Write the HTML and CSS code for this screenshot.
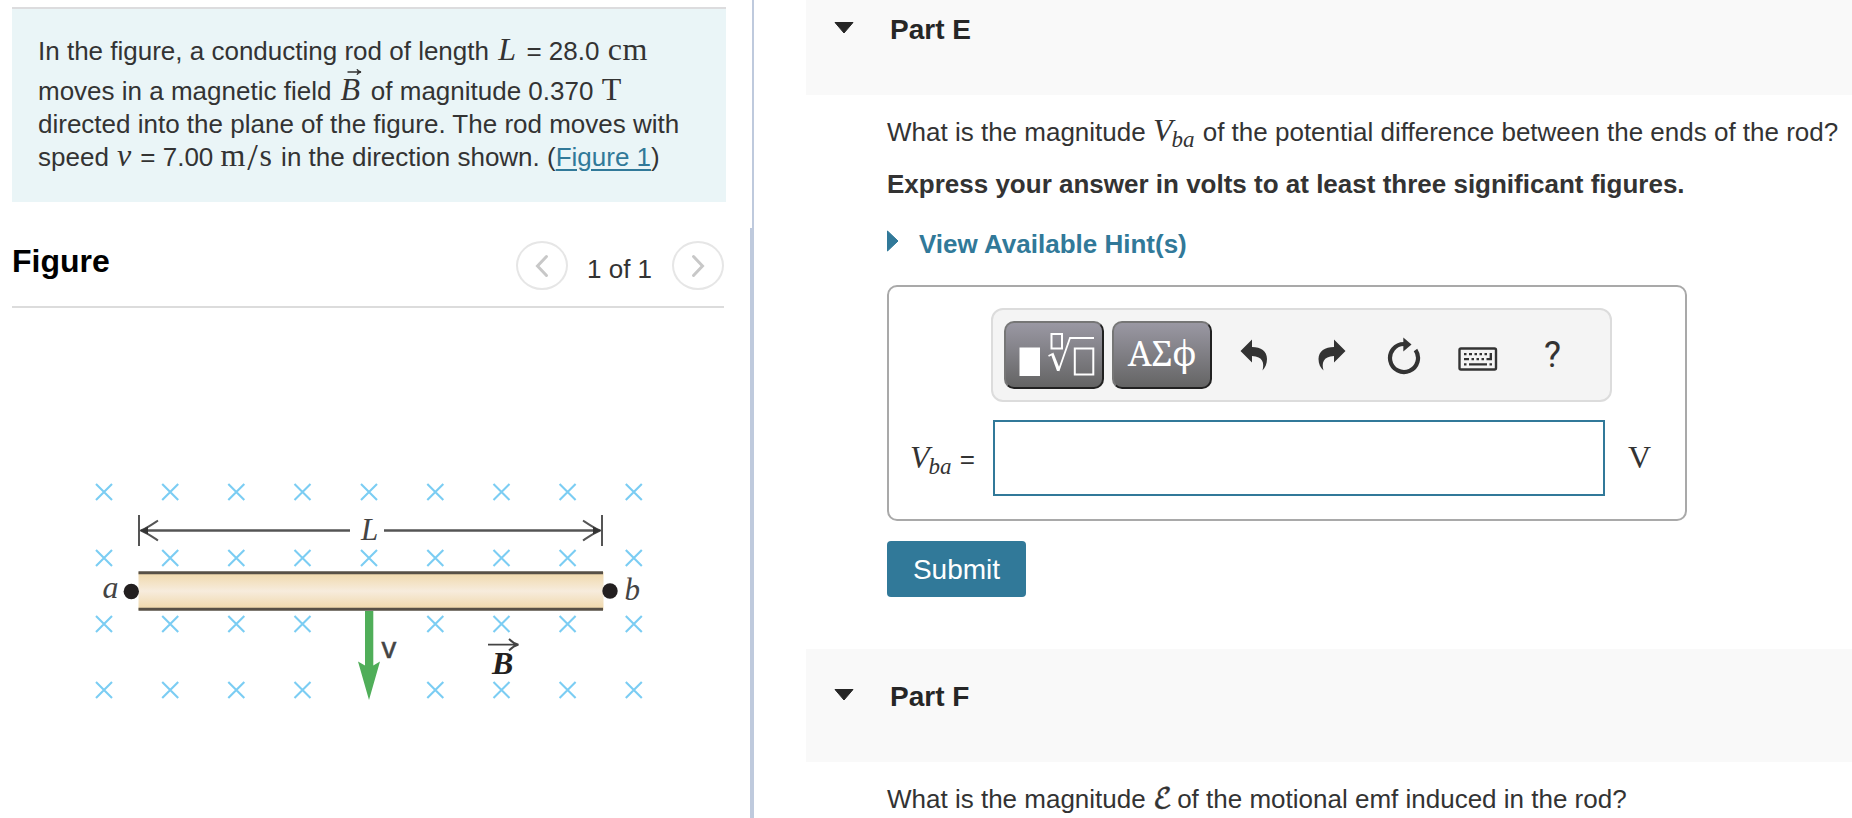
FILE: index.html
```html
<!DOCTYPE html>
<html lang="en">

<head>
    <meta charset="UTF-8" />
    <title>Motional emf</title>
    <link rel="stylesheet" href="styles.css">
</head>

<body>
    <div class="page">
        <div class="left">
            <div class="problem">
                <span class="line">In the figure, a conducting rod of length <i class="math sym-l">L</i> = 28.0 <span class="math unit-cm">cm</span></span>
                <span class="line raised">moves in a magnetic field <span class="math sym-b"><i>B</i><svg class="vec" width="15" height="8" viewBox="0 0 15 8"><path d="M0.5 4H13M10 1.2C10.6 2.8 12 3.7 14 4C12 4.3 10.6 5.2 10 6.8" fill="none" stroke="#333" stroke-width="1.4"/></svg></span> of magnitude 0.370 <span class="math unit-t">T</span></span>
                <span class="line">directed into the plane of the figure. The rod moves with</span>
                <span class="line">speed <i class="math sym-v">v</i> = 7.00 <span class="math unit-ms">m<span class="slash">/</span>s</span> in the direction shown. (<a class="link">Figure 1</a>)</span>
            </div>
            <div class="fighead">
                <h2>Figure</h2>
                <div class="pager">
                    <span class="round"><svg width="14" height="24" viewBox="0 0 14 24"><path d="M11.5 2.5L2.5 12L11.5 21.5" fill="none" stroke="#c8c8c8" stroke-width="3" stroke-linecap="round"/></svg></span>
                    <span class="count">1 of 1</span>
                    <span class="round"><svg width="14" height="24" viewBox="0 0 14 24"><path d="M2.5 2.5L11.5 12L2.5 21.5" fill="none" stroke="#c8c8c8" stroke-width="3" stroke-linecap="round"/></svg></span>
                </div>
            </div>
            <svg class="figure" width="712" height="510" viewBox="12 308 712 510">
                <defs>
                    <linearGradient id="rod" x1="0" y1="0" x2="0" y2="1">
                        <stop offset="0" stop-color="#efd7a8"/>
                        <stop offset="0.5" stop-color="#f7ecdd"/>
                        <stop offset="1" stop-color="#efd7a8"/>
                    </linearGradient>
                    <path id="x" d="M-8 -8L8 8M8 -8L-8 8" stroke="#7bcdf3" stroke-width="2.1"/>
                    <g id="four">
                        <use href="#x" x="104"/><use href="#x" x="170.2"/><use href="#x" x="236.3"/><use href="#x" x="302.5"/>
                    </g>
                    <g id="row">
                        <use href="#four"/><use href="#four" x="331.3"/>
                    </g>
                </defs>
                <use href="#row" y="492"/><use href="#x" x="369" y="492"/>
                <use href="#row" y="558"/><use href="#x" x="369" y="558"/>
                <use href="#row" y="624"/>
                <use href="#row" y="690"/>
                <!-- length marker -->
                <g fill="none" stroke="#555" stroke-width="2">
                    <path d="M139 515V546M602 515V546"/>
                    <path d="M141 530.5H350M384 530.5H600" stroke-width="2.4"/>
                    <path d="M158 520.5C152 524.5 147 528 141 530.5C147 533 152 536.5 158 540.5M583 520.5C589 524.5 594 528 600 530.5C594 533 589 536.5 583 540.5"/>
                </g>
                <path d="M140 530.5L148 526.5V534.5ZM601 530.5L593 526.5V534.5Z" fill="#333"/>
                <text class="lab" x="361" y="540" font-size="31">L</text>
                <!-- rod -->
                <rect x="138.5" y="572" width="465" height="38" fill="url(#rod)"/>
                <path d="M138.5 572.7H603M138.5 609.3H603" stroke="#575046" stroke-width="3"/>
                <circle cx="131.3" cy="591.5" r="7.7" fill="#231f20"/>
                <circle cx="610" cy="591" r="7.7" fill="#231f20"/>
                <text class="lab" x="102.5" y="598" font-size="32">a</text>
                <text class="lab" x="624.5" y="600" font-size="31">b</text>
                <!-- velocity -->
                <path d="M365 611H373.3V665.5L380 661.5L369 700L358 661.5L365 665.5Z" fill="#50ae59"/>
                <text class="vel" x="381.5" y="658">v</text>
                <path d="M488 644.7H517M509 639C512 642 515 644 518.5 644.7C515 645.5 512 647.5 509 650.5" fill="none" stroke="#444" stroke-width="1.8"/>
                <text class="lab bold" x="492" y="674" font-size="32">B</text>
            </svg>
        </div>
        <div class="divider"><div class="thumb"></div></div>
        <div class="right">
            <div class="parthead"><svg width="20" height="12" viewBox="0 0 20 12"><path d="M1 0.5H19L10 11Z" fill="#262626" stroke="#262626" stroke-linejoin="round"/></svg><h3>Part E</h3></div>
            <div class="body">
                <p>What is the magnitude <span class="math sym-vba"><i>V</i><i class="sub">ba</i></span> of the potential difference between the ends of the rod?</p>
                <p class="instr">Express your answer in volts to at least three significant figures.</p>
                <p class="hint"><svg width="12" height="22" viewBox="0 0 12 22"><path d="M0.5 1V21L11 11Z" fill="#317999" stroke="#317999" stroke-linejoin="round"/></svg>View Available Hint(s)</p>
                <div class="answer">
                    <div class="toolbar">
                        <span class="key"><svg width="96" height="64" viewBox="0 0 96 64">
                            <rect x="13.5" y="24.5" width="20.5" height="28.5" fill="#fff"/>
                            <g fill="none" stroke="#fff" stroke-width="2">
                                <rect x="45.5" y="11" width="10.5" height="14.5"/>
                                <rect x="68.8" y="25.5" width="18.5" height="26"/>
                                <path d="M42.5 33L46.5 31M52.5 48L64 15H88" stroke-width="1.8"/>
                            </g>
                            <path d="M45 31.5L47.3 29.5L53.5 45L52.5 48H51Z" fill="#fff"/>
                        </svg></span>
                        <span class="key greek">ΑΣϕ</span>
                        <svg class="undo" width="28" height="32" viewBox="0 0 28 32"><path d="M0.5 12L12 0.5V8C21 8 27 12 27 20C27 25 25 29 22.5 31.5C24.5 24 23 17.5 12 17V23.5Z" fill="#333"/></svg>
                        <svg class="redo" width="28" height="32" viewBox="0 0 28 32"><path d="M27.5 12L16 0.5V8C7 8 0.5 12 0.5 20C0.5 25 2.5 29 5.5 31.5C3.5 24 5 17.5 16 17V23.5Z" fill="#333"/></svg>
                        <svg class="reset" width="34" height="38" viewBox="0 0 34 38"><path d="M17 7A14 14 0 1 0 28.5 13" fill="none" stroke="#333" stroke-width="4.2"/><path d="M16.3 0.5L24.5 7.5L16.3 14.5Z" fill="#333"/></svg>
                        <svg class="keyboard" width="40" height="24" viewBox="0 0 40 24">
                            <rect x="1.5" y="1.5" width="36.5" height="21" rx="1.5" fill="none" stroke="#333" stroke-width="2.4"/>
                            <path d="M6 7.2H8.5M11 7.2H14M16.5 7.2H19M21.5 7.2H24M26.5 7.2H29M6 12.2H11M13.5 12.2H16M18.5 12.2H21M23.5 12.2H26M28.5 12.2H34M6 17.3H8.5M11 17.3H29M31.5 17.3H34" stroke="#333" stroke-width="2.3"/>
                            <path d="M32.8 6V13" stroke="#333" stroke-width="2.4"/>
                        </svg>
                        <span class="help">?</span>
                    </div>
                    <div class="entry">
                        <span class="label"><span class="math sym-vba"><i>V</i><i class="sub">ba</i></span> =</span>
                        <input type="text" class="field">
                        <span class="math unit-v">V</span>
                    </div>
                </div>
                <button class="submit">Submit</button>
            </div>
            <div class="parthead"><svg width="20" height="12" viewBox="0 0 20 12"><path d="M1 0.5H19L10 11Z" fill="#262626" stroke="#262626" stroke-linejoin="round"/></svg><h3>Part F</h3></div>
            <div class="body">
                <p>What is the magnitude <span class="sym-e">ℰ</span> of the motional emf induced in the rod?</p>
            </div>
        </div>
    </div>
</body>

</html>
```

FILE: styles.css
```css
body {
    margin: 0;
    background: #fff;
    color: #333;
    font-family: "Liberation Sans", Arial, sans-serif;
    font-size: 26px;
    overflow: hidden;
}

.page {
    display: flex;
    height: 818px;
    overflow: hidden;
}

.left {
    width: 738px;
    padding: 7px 0 0 12px;
    flex: none;
}

.problem {
    width: 714px;
    height: 195px;
    box-sizing: border-box;
    border-top: 2px solid #dcdcde;
    background: #eaf5f7;
    padding: 26px 0 0 26px;
    white-space: nowrap;
}

.line {
    display: block;
    line-height: 33px;
}

.line.raised {
    padding-top: 7px;
}

.math {
    display: inline-block;
    font-family: "Liberation Serif", "Times New Roman", serif;
    font-size: 32px;
    line-height: 0;
    white-space: nowrap;
}

.sym-l {
    width: 21px;
    margin-left: 2px;
}

.unit-cm {
    letter-spacing: 0.5px;
    margin-left: 1px;
}

.sym-b {
    position: relative;
    width: 23px;
    margin-left: 2px;
}

.unit-t {
    margin-left: 1px;
}

.vec {
    position: absolute;
    left: 6px;
    top: -21px;
}

.sym-v {
    width: 16px;
    margin-left: 1px;
}

.unit-ms {
    letter-spacing: 1.8px;
}

.slash {
    font-size: 38px;
    vertical-align: -4px;
}

.link {
    color: #317999;
    text-decoration: underline;
    text-decoration-thickness: 2px;
    text-underline-offset: 3px;
}

.fighead {
    display: flex;
    justify-content: space-between;
    width: 712px;
    height: 106px;
    box-sizing: border-box;
    border-bottom: 2px solid #dcdcdc;
}

h2 {
    margin: 41px 0 0;
    color: #000;
    font-size: 32px;
    line-height: 36px;
}

.pager {
    display: flex;
    gap: 21px;
    padding-top: 39px;
}

.round {
    display: flex;
    align-items: center;
    justify-content: center;
    width: 52px;
    height: 49px;
    box-sizing: border-box;
    border: 2px solid #e6e6e6;
    border-radius: 50%;
}

.count {
    width: 62px;
    margin: 0 2px 0 -2px;
    line-height: 57px;
    text-align: center;
    white-space: nowrap;
}

.figure {
    display: block;
}

.lab {
    font-family: "Liberation Serif", serif;
    font-style: italic;
    fill: #444;
}

.bold {
    font-weight: bold;
    fill: #231f20;
}

.vel {
    font-family: "Noto Sans", sans-serif;
    font-size: 29px;
    fill: #444;
    stroke: #444;
    stroke-width: 0.5px;
}

.divider {
    flex: none;
    width: 4px;
    height: 818px;
    box-sizing: border-box;
    padding-top: 228px;
    background: linear-gradient(to right, #fff 2px, #bfcadd 2px);
}

.thumb {
    height: 590px;
    background: #bfcadd;
}

.right {
    flex: 1;
    margin: -18px 0 0 52px;
}

.parthead {
    display: flex;
    height: 113px;
    box-sizing: border-box;
    padding: 30px 0 0 28px;
    background: #f9f9f9;
    color: #262626;
}

.parthead svg {
    margin-top: 10px;
}

h3 {
    margin: 1px 0 0 36px;
    font-size: 28px;
    line-height: 34px;
}

.body {
    padding: 20px 0 0 81px;
    white-space: nowrap;
}

p {
    margin: 0;
    line-height: 34px;
}

.sub {
    font-size: 23px;
    position: relative;
    top: 6px;
    left: -1px;
}

.instr {
    margin-top: 18px;
    font-weight: bold;
}

.hint {
    display: flex;
    gap: 20px;
    margin-top: 26px;
    color: #317999;
    font-weight: bold;
}

.hint svg {
    margin-top: 3px;
}

.answer {
    width: 800px;
    height: 236px;
    box-sizing: border-box;
    margin-top: 24px;
    border: 2px solid #a9a9a9;
    border-radius: 10px;
    padding-top: 21px;
}

.toolbar {
    display: flex;
    width: 621px;
    height: 94px;
    box-sizing: border-box;
    margin-left: 102px;
    border: 2px solid #dcdcdc;
    border-radius: 12px;
    background: #f4f4f4;
    padding: 11px;
}

.key {
    width: 100px;
    height: 68px;
    box-sizing: border-box;
    margin-right: 8px;
    border: 2px solid;
    border-color: #767676 #212121 #212121 #767676;
    border-radius: 10px;
    background: linear-gradient(#9a98a3, #646464);
    color: #fff;
}

.greek {
    font-family: "Noto Serif", "Liberation Serif", serif;
    font-size: 34px;
    line-height: 60px;
    text-align: center;
}

.undo {
    margin: 18px 0 0 20px;
}

.redo {
    margin: 18px 0 0 50px;
}

.reset {
    margin: 16px 0 0 41px;
}

.keyboard {
    margin: 26px 0 0 37px;
}

.help {
    margin: 16px 0 0 46px;
    font-family: Roboto, sans-serif;
    font-size: 36px;
    line-height: 36px;
}

.entry {
    display: flex;
    align-items: flex-start;
    margin-top: 18px;
}

.label {
    width: 81px;
    margin-left: 21px;
    box-sizing: border-box;
    line-height: 78px;
    white-space: nowrap;
}

.field {
    width: 612px;
    height: 76px;
    box-sizing: border-box;
    margin-left: 2px;
    border: 2px solid #317999;
    background: #fff;
    padding: 0 10px;
    font-size: 26px;
}

.unit-v {
    margin-left: 23px;
    line-height: 75px;
}

.submit {
    display: block;
    width: 139px;
    height: 56px;
    margin: 20px 0 52px;
    border: 0;
    border-radius: 4px;
    padding: 1px 0 0;
    background: #317999;
    color: #fff;
    font-family: inherit;
    font-size: 28px;
}

.sym-e {
    display: inline-block;
    width: 17px;
    font-family: "DejaVu Math TeX Gyre", "DejaVu Serif", "DejaVu Sans", serif;
    font-size: 28px;
    line-height: 0;
    -webkit-text-stroke: 0.5px #333;
}
```
